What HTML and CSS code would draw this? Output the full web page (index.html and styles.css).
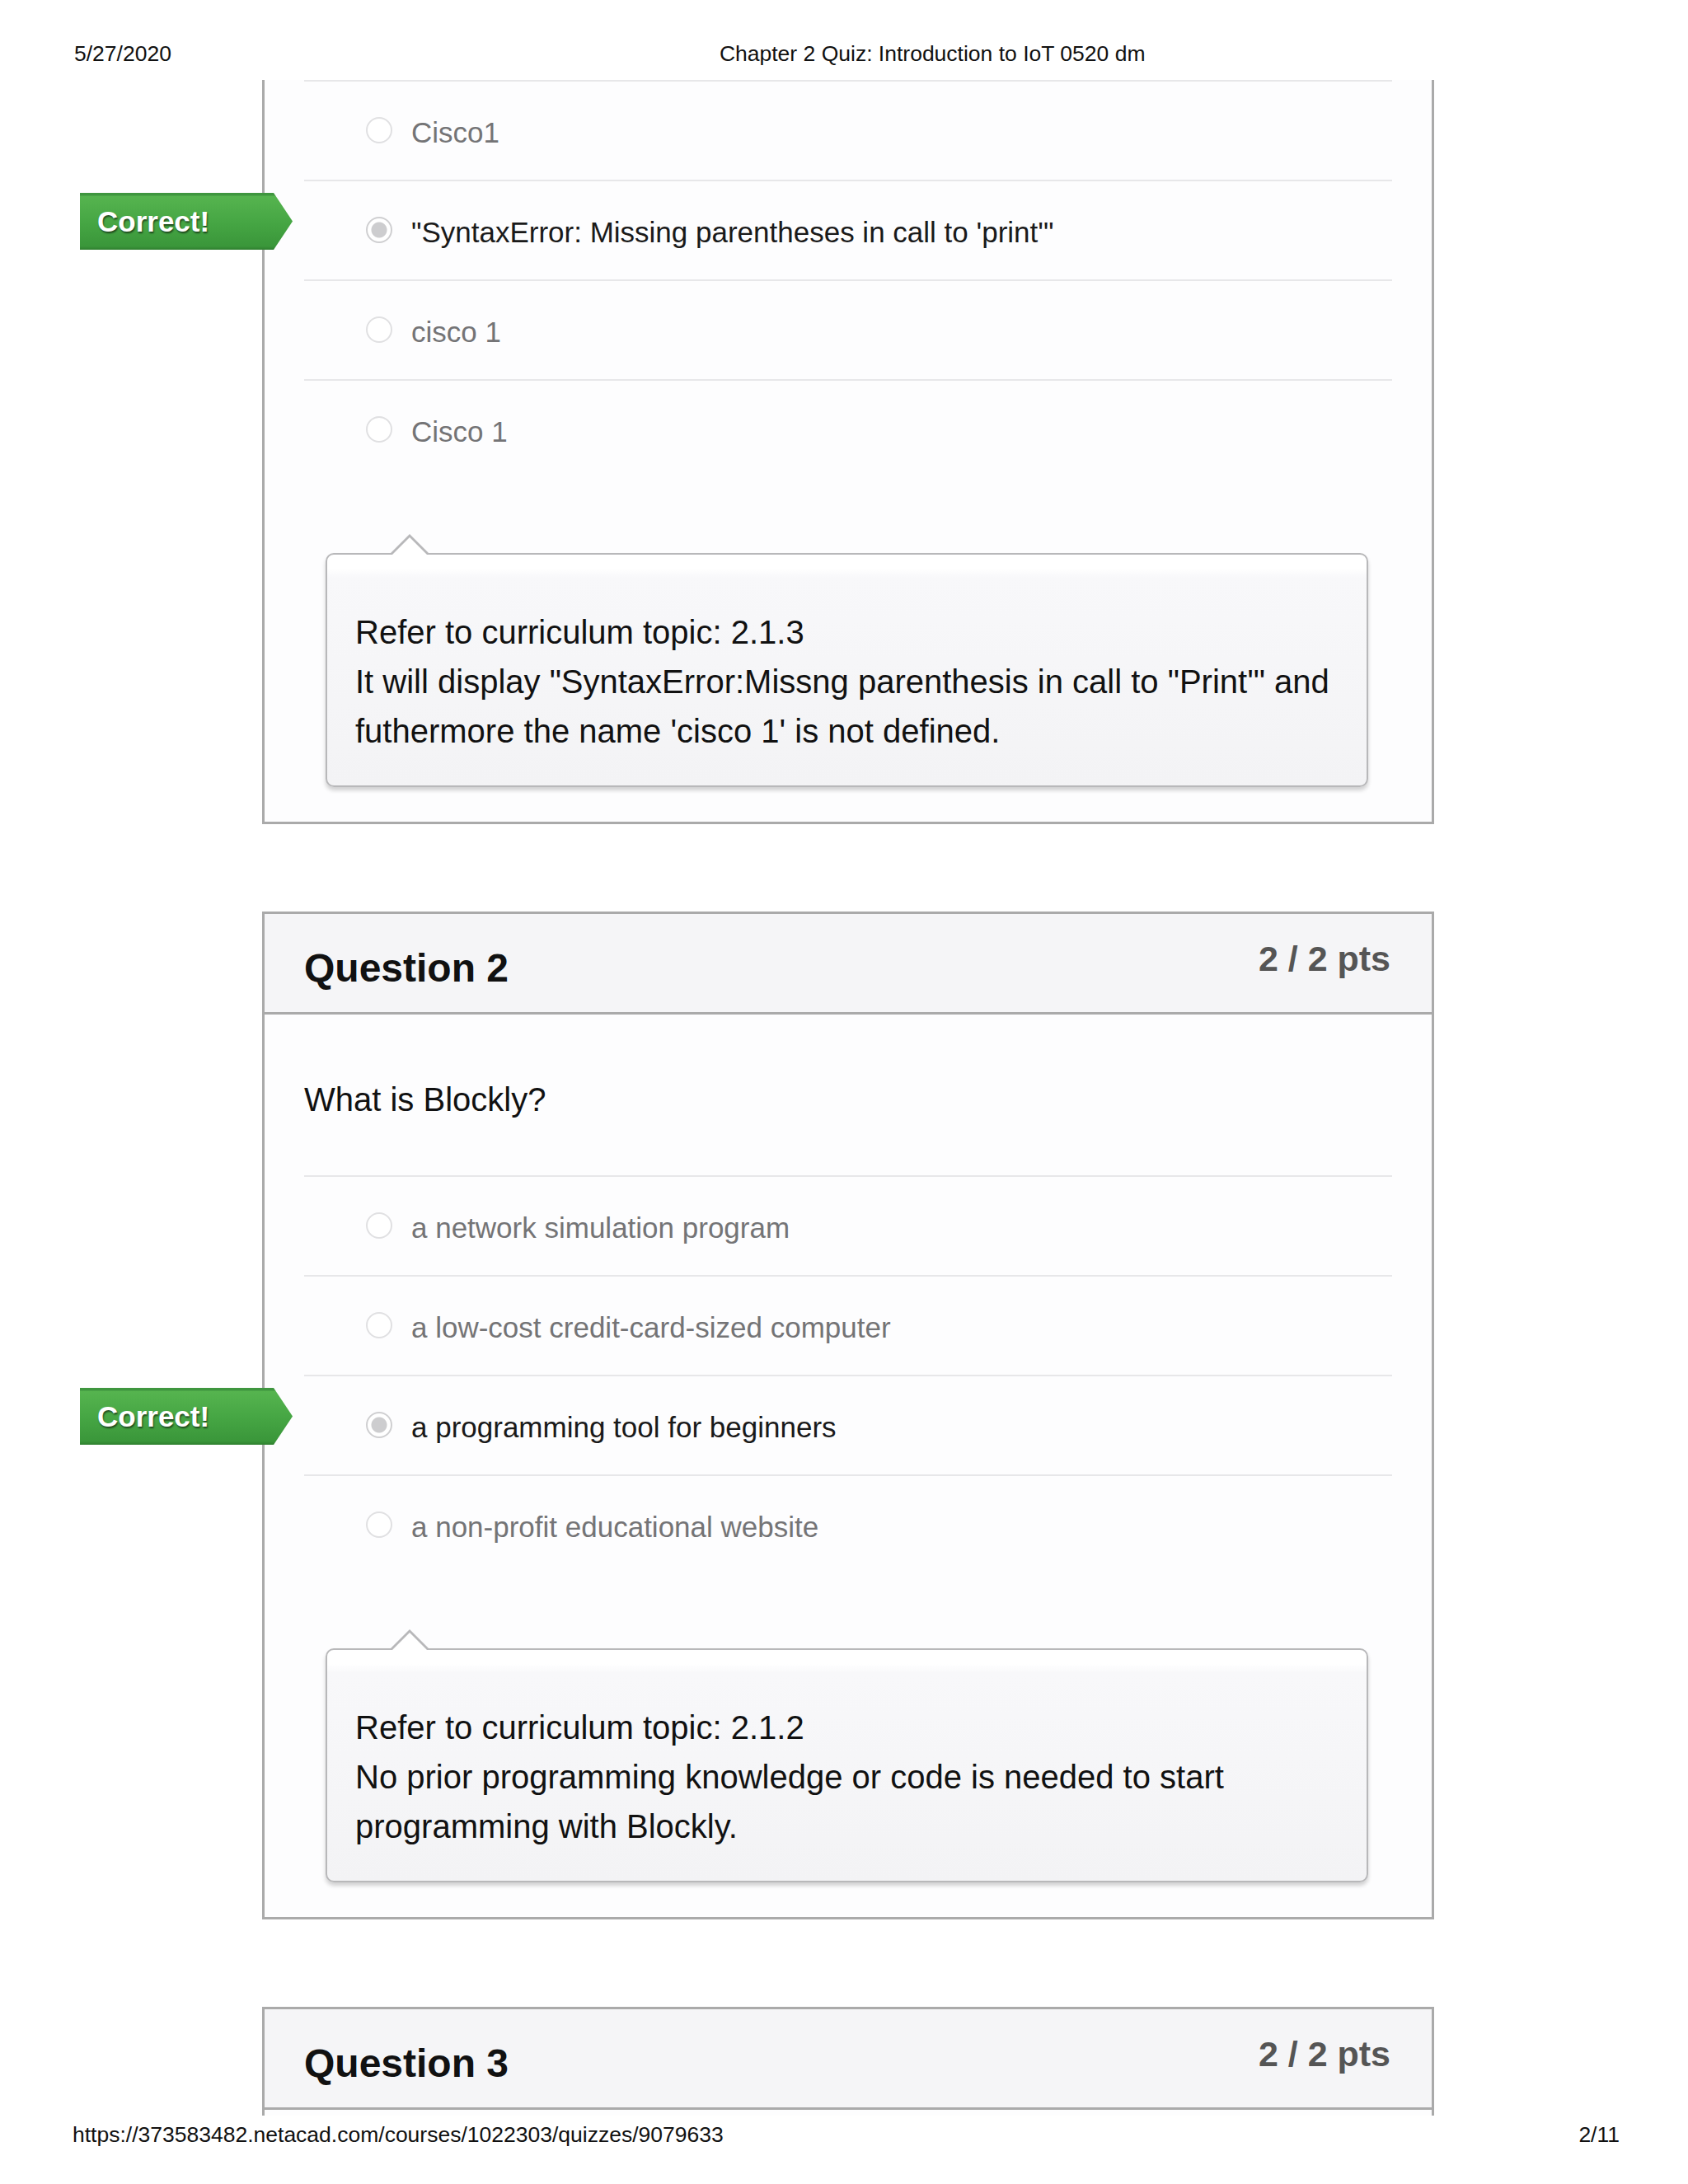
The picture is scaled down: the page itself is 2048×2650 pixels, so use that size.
FILE: index.html
```html
<!DOCTYPE html>
<html lang="en">
<head>
<meta charset="utf-8">
<title>Chapter 2 Quiz: Introduction to IoT 0520 dm</title>
<link rel="stylesheet" href="styles.css">
</head>
<body>
<header class="print-header">
  <span class="print-date">5/27/2020</span>
  <span class="print-title">Chapter 2 Quiz: Introduction to IoT 0520 dm</span>
</header>

<main class="viewport">
  <div class="quiz">

    <section class="card card-continued">
      <div class="answers">
        <div class="answer"><span class="radio"></span><span class="answer-text">Cisco1</span></div>
        <div class="answer answer-selected">
          <span class="badge">Correct!</span>
          <span class="radio radio-checked"></span><span class="answer-text">"SyntaxError: Missing parentheses in call to 'print'"</span>
        </div>
        <div class="answer"><span class="radio"></span><span class="answer-text">cisco 1</span></div>
        <div class="answer"><span class="radio"></span><span class="answer-text">Cisco 1</span></div>
      </div>
      <div class="feedback">
        <p>Refer to curriculum topic: 2.1.3<br>It will display "SyntaxError:Missng parenthesis in call to "Print'" and futhermore the name 'cisco 1' is not defined.</p>
      </div>
    </section>

    <section class="card">
      <div class="card-header">
        <h2 class="q-title">Question 2</h2>
        <span class="q-pts">2 / 2 pts</span>
      </div>
      <div class="q-text">What is Blockly?</div>
      <div class="answers">
        <div class="answer"><span class="radio"></span><span class="answer-text">a network simulation program</span></div>
        <div class="answer"><span class="radio"></span><span class="answer-text">a low-cost credit-card-sized computer</span></div>
        <div class="answer answer-selected">
          <span class="badge">Correct!</span>
          <span class="radio radio-checked"></span><span class="answer-text">a programming tool for beginners</span>
        </div>
        <div class="answer"><span class="radio"></span><span class="answer-text">a non-profit educational website</span></div>
      </div>
      <div class="feedback">
        <p>Refer to curriculum topic: 2.1.2<br>No prior programming knowledge or code is needed to start programming with Blockly.</p>
      </div>
    </section>

    <section class="card">
      <div class="card-header">
        <h2 class="q-title">Question 3</h2>
        <span class="q-pts">2 / 2 pts</span>
      </div>
      <div class="q-text">&nbsp;</div>
    </section>

  </div>
</main>

<footer class="print-footer">
  <span>https://373583482.netacad.com/courses/1022303/quizzes/9079633</span>
  <span>2/11</span>
</footer>
</body>
</html>
```

FILE: styles.css
```css
* { box-sizing: border-box; }

html, body {
  margin: 0;
  padding: 0;
  background: #ffffff;
}

body {
  width: 2048px;
  font-family: "Liberation Sans", Arial, Helvetica, sans-serif;
  color: #222;
}

/* print header / footer */
.print-header {
  height: 97px;
  padding: 50px 0 0 90px;
  display: flex;
  font-size: 26.5px;
  line-height: 30px;
  color: #111;
}
.print-title {
  margin-left: 665px;
}

.print-footer {
  display: flex;
  justify-content: space-between;
  padding: 8px 83px 0 88px;
  font-size: 26.5px;
  line-height: 30px;
  color: #111;
}

/* clipped page content */
.viewport {
  height: 2470px;
  overflow: hidden;
}

.quiz {
  margin-left: 318px;
  width: 1422px;
}

.card {
  border: 3px solid #aaaaaa;
  background: #fdfdfe;
  margin-bottom: 106px;
  padding-bottom: 42px;
}
.card-continued {
  border-top: none;
}

.card-header {
  height: 122px;
  background: #f5f5f7;
  border-bottom: 3px solid #aaaaaa;
  display: flex;
  justify-content: space-between;
  align-items: center;
  padding: 0 50px 0 48px;
}
.q-title {
  margin: 0;
  padding-top: 12px;
  font-size: 48px;
  font-weight: bold;
  color: #111;
}
.q-pts {
  padding-bottom: 10px;
  font-size: 43px;
  font-weight: bold;
  color: #555;
}

.q-text {
  padding: 73px 48px 62px;
  font-size: 40px;
  line-height: 60px;
  color: #111;
}

/* answers */
.answers {
  padding: 0 48px;
}
.answer {
  position: relative;
  height: 121px;
  border-top: 2px solid #e7e7e9;
  display: flex;
  align-items: center;
  padding: 4px 0 0 75px;
  gap: 23px;
}
.radio {
  flex: none;
  width: 32px;
  height: 32px;
  border-radius: 50%;
  border: 2px solid #e0e0e2;
  background: #ffffff;
  margin-top: -6px;
}
.radio-checked {
  border-color: #cfcfd1;
  background: radial-gradient(circle, #cdcdcf 0, #cdcdcf 9px, #ffffff 10px);
}
.answer-text {
  font-size: 35px;
  line-height: 44px;
  color: #747476;
}
.answer-selected .answer-text {
  color: #1a1a1a;
}

/* Correct! flag */
.badge {
  position: absolute;
  left: -272px;
  top: 14px;
  width: 258px;
  height: 69px;
  padding: 0 0 0 21px;
  display: flex;
  align-items: center;
  font-size: 35px;
  font-weight: bold;
  color: #ffffff;
  text-shadow: 1px 2px 2px rgba(0, 0, 0, 0.55);
  background: linear-gradient(#3f963f 0, #3f963f 3px, #56b44f 4px, #45a543 55%, #3a963a 94%, #2f7f2f 100%);
  clip-path: polygon(0 0, 235px 0, 258px 50%, 235px 100%, 0 100%);
}

/* feedback bubble */
.feedback {
  position: relative;
  margin: 90px 77px 0 74px;
  border: 2px solid #b8b8ba;
  border-radius: 10px;
  background: linear-gradient(#ffffff 0, #ffffff 6%, #f8f8fa 10%, #f3f3f5 100%);
  box-shadow: 0 4px 5px rgba(0, 0, 0, 0.18);
  padding: 64px 30px 36px 34px;
}
.feedback::before,
.feedback::after {
  content: "";
  position: absolute;
  width: 0;
  height: 0;
  border-style: solid;
  border-color: transparent;
}
.feedback::before {
  top: -25px;
  left: 76px;
  border-width: 0 24px 24px 24px;
  border-bottom-color: #b8b8ba;
}
.feedback::after {
  top: -21px;
  left: 79px;
  border-width: 0 21px 21px 21px;
  border-bottom-color: #ffffff;
}
.feedback p {
  margin: 0;
  font-size: 40px;
  line-height: 60px;
  color: #111;
}
```
